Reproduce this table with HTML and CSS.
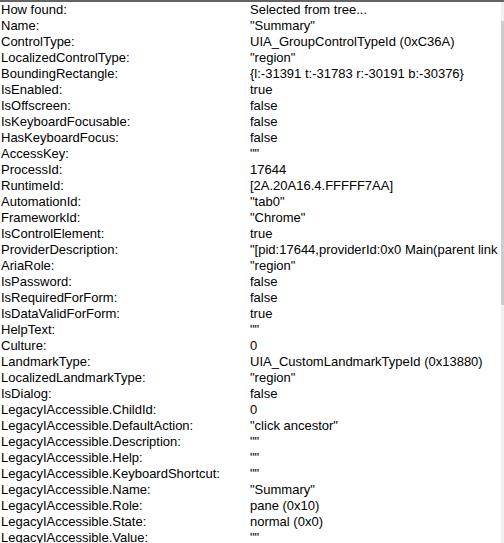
FILE: index.html
```html
<!DOCTYPE html>
<html>
<head>
<meta charset="utf-8">
<link rel="stylesheet" href="styles.css">
</head>
<body>
<div class="pane">
  <div class="list">
    <div class="row"><span class="k">How found:</span><span class="v">Selected from tree...</span></div>
    <div class="row"><span class="k">Name:</span><span class="v">"Summary"</span></div>
    <div class="row"><span class="k">ControlType:</span><span class="v">UIA_GroupControlTypeId (0xC36A)</span></div>
    <div class="row"><span class="k">LocalizedControlType:</span><span class="v">"region"</span></div>
    <div class="row"><span class="k">BoundingRectangle:</span><span class="v">{l:-31391 t:-31783 r:-30191 b:-30376}</span></div>
    <div class="row"><span class="k">IsEnabled:</span><span class="v">true</span></div>
    <div class="row"><span class="k">IsOffscreen:</span><span class="v">false</span></div>
    <div class="row"><span class="k">IsKeyboardFocusable:</span><span class="v">false</span></div>
    <div class="row"><span class="k">HasKeyboardFocus:</span><span class="v">false</span></div>
    <div class="row"><span class="k">AccessKey:</span><span class="v">""</span></div>
    <div class="row"><span class="k">ProcessId:</span><span class="v">17644</span></div>
    <div class="row"><span class="k">RuntimeId:</span><span class="v">[2A.20A16.4.FFFFF7AA]</span></div>
    <div class="row"><span class="k">AutomationId:</span><span class="v">"tab0"</span></div>
    <div class="row"><span class="k">FrameworkId:</span><span class="v">"Chrome"</span></div>
    <div class="row"><span class="k">IsControlElement:</span><span class="v">true</span></div>
    <div class="row"><span class="k">ProviderDescription:</span><span class="v">"[pid:17644,providerId:0x0 Main(parent link</span></div>
    <div class="row"><span class="k">AriaRole:</span><span class="v">"region"</span></div>
    <div class="row"><span class="k">IsPassword:</span><span class="v">false</span></div>
    <div class="row"><span class="k">IsRequiredForForm:</span><span class="v">false</span></div>
    <div class="row"><span class="k">IsDataValidForForm:</span><span class="v">true</span></div>
    <div class="row"><span class="k">HelpText:</span><span class="v">""</span></div>
    <div class="row"><span class="k">Culture:</span><span class="v">0</span></div>
    <div class="row"><span class="k">LandmarkType:</span><span class="v">UIA_CustomLandmarkTypeId (0x13880)</span></div>
    <div class="row"><span class="k">LocalizedLandmarkType:</span><span class="v">"region"</span></div>
    <div class="row"><span class="k">IsDialog:</span><span class="v">false</span></div>
    <div class="row"><span class="k">LegacyIAccessible.ChildId:</span><span class="v">0</span></div>
    <div class="row"><span class="k">LegacyIAccessible.DefaultAction:</span><span class="v">"click ancestor"</span></div>
    <div class="row"><span class="k">LegacyIAccessible.Description:</span><span class="v">""</span></div>
    <div class="row"><span class="k">LegacyIAccessible.Help:</span><span class="v">""</span></div>
    <div class="row"><span class="k">LegacyIAccessible.KeyboardShortcut:</span><span class="v">""</span></div>
    <div class="row"><span class="k">LegacyIAccessible.Name:</span><span class="v">"Summary"</span></div>
    <div class="row"><span class="k">LegacyIAccessible.Role:</span><span class="v">pane (0x10)</span></div>
    <div class="row"><span class="k">LegacyIAccessible.State:</span><span class="v">normal (0x0)</span></div>
    <div class="row"><span class="k">LegacyIAccessible.Value:</span><span class="v">""</span></div>
  </div>
  <div class="scrollbar"><div class="thumb"></div></div>
</div>
</body>
</html>
```

FILE: styles.css
```css
html, body {
  margin: 0;
  padding: 0;
  background: #ffffff;
  overflow: hidden;
}
.pane {
  width: 504px;
  height: 543px;
  box-sizing: border-box;
  border-top: 2px solid #646464;
  display: flex;
  overflow: hidden;
}
.list {
  flex: 1;
  min-width: 0;
  overflow: hidden;
  font-family: "Liberation Sans", Arial, sans-serif;
  font-size: 13px;
  color: #000000;
}
.row {
  display: grid;
  grid-template-columns: 249px 1fr;
  height: 16px;
  line-height: 16px;
  padding-left: 1px;
  white-space: nowrap;
}
.k, .v {
  overflow: hidden;
}
.scrollbar {
  width: 3px;
  flex: none;
  background: #f0f0f0;
  padding-top: 19px;
}
.thumb {
  height: 284px;
  background: #cdcdcd;
}
```
